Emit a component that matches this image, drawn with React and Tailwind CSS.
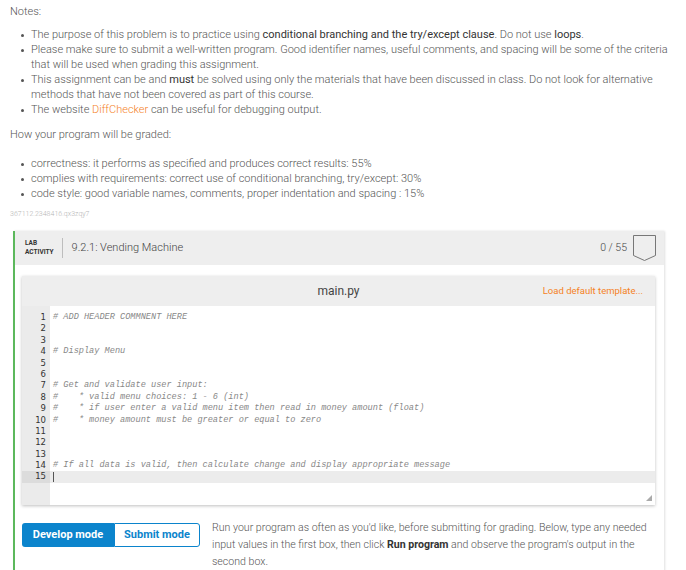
import React from "react";

const notes = [
    <>The purpose of this problem is to practice using <span className="font-normal text-[#333]">conditional branching and the try/except clause</span>. Do not use <span className="font-normal text-[#333]">loops</span>.</>,
    <>Please make sure to submit a well-written program. Good identifier names, useful comments, and spacing will be some of the criteria that will be used when grading this assignment.</>,
    <>This assignment can be and <span className="font-normal text-[#333]">must</span> be solved using only the materials that have been discussed in class. Do not look for alternative methods that have not been covered as part of this course.</>,
    <>The website <span className="text-[#f5821f]">DiffChecker</span> can be useful for debugging output.</>,
];

const grading = [
    "correctness: it performs as specified and produces correct results: 55%",
    "complies with requirements: correct use of conditional branching, try/except: 30%",
    "code style: good variable names, comments, proper indentation and spacing : 15%",
];

// source lines shown in the editor
const code = [
    "# ADD HEADER COMMNENT HERE",
    "",
    "",
    "# Display Menu",
    "",
    "",
    "# Get and validate user input:",
    "#    * valid menu choices: 1 - 6 (int)",
    "#    * if user enter a valid menu item then read in money amount (float)",
    "#    * money amount must be greater or equal to zero",
    "",
    "",
    "",
    "# If all data is valid, then calculate change and display appropriate message",
    "",
];

const Bullet = ({ children }) => (
    <li className="flex items-start">
        <span className="mt-[6.5px] ml-[11px] mr-[7px] h-[3px] w-[3px] shrink-0 rounded-full bg-[#555]"></span>
        <span>{children}</span>
    </li>
);

const App = () => {
    return (
        <div className="h-[570px] w-[686px] overflow-hidden bg-white font-['Roboto',sans-serif] text-[#555]">
            {/* instructions */}
            <div className="pl-[10px] pr-[18px] pt-[4px] text-[11px] font-light leading-[15px]">
                <p>Notes:</p>
                <ul className="mt-[8px]">
                    {notes.map((n, i) => <Bullet key={i}>{n}</Bullet>)}
                </ul>
                <p className="mt-[10px]">How your program will be graded:</p>
                <ul className="mt-[14px]">
                    {grading.map((g, i) => <Bullet key={i}>{g}</Bullet>)}
                </ul>
                <p className="mt-[9px] text-[7px] leading-[8px] text-[#b5b5b5]">367112.2348416.qx3zqy7</p>
            </div>

            {/* lab activity box */}
            <div className="mt-[13px] ml-[13px] w-[651px] border-l-2 border-[#5cb85c] shadow-[1px_0_2px_rgba(0,0,0,0.12)]">
                <div className="flex h-[34px] items-center bg-[#eeeeee] pl-[10px] pr-[7px]">
                    <div className="text-[6.5px] font-bold uppercase leading-[9px] text-[#333]">
                        Lab<br />Activity
                    </div>
                    <div className="ml-[8px] mr-[9px] h-[20px] w-px bg-[#bdbdbd]"></div>
                    <span className="text-[11px] font-light text-[#444]">9.2.1: Vending Machine</span>
                    <span className="ml-auto mr-[6px] text-[10.5px] font-light text-[#444]">0 / 55</span>
                    <svg width="24" height="27" viewBox="0 0 24 27">
                        <path d="M0.5 0.5 H22.5 V20.5 L11.5 25.5 L0.5 20.5 Z" fill="none" stroke="#777" strokeWidth="1" />
                    </svg>
                </div>

                <div className="bg-white pl-[7px] pr-[9px] pt-[11px] pb-[20px]">
                    {/* editor */}
                    <div className="shadow-[0_1px_3px_rgba(0,0,0,0.25)]">
                        <div className="grid h-[30px] grid-cols-[1fr_auto_1fr] items-center bg-[#eeeeee]">
                            <span></span>
                            <span className="text-[12px] text-[#444]">main.py</span>
                            <span className="pr-[12px] text-right text-[9.5px] text-[#f5821f]">Load default template...</span>
                        </div>
                        <div className="relative flex h-[199px] bg-white">
                            <div className="w-[28px] bg-[#ebebeb] pt-[6px]">
                                {code.map((_, i) => (
                                    <div
                                        key={i}
                                        className={i === 14
                                            ? "h-[11.4px] bg-[#dcdcdc] pr-[4px] text-right font-['DejaVu_Sans',sans-serif] text-[8.5px] leading-[11.4px] text-[#333]"
                                            : "h-[11.4px] pr-[4px] text-right font-['DejaVu_Sans',sans-serif] text-[8.5px] leading-[11.4px] text-[#333]"}
                                    >
                                        {i + 1}
                                    </div>
                                ))}
                            </div>
                            <div className="flex-1 pt-[6px]">
                                {code.map((line, i) => (
                                    <div
                                        key={i}
                                        className={i === 14
                                            ? "flex h-[11.4px] items-center bg-[#ececec] pl-[3px]"
                                            : "h-[11.4px] whitespace-pre pl-[3px] font-['Liberation_Mono',monospace] text-[8.6px] italic leading-[11.4px] text-[#888]"}
                                    >
                                        {i === 14 ? <span className="h-[10px] w-px bg-[#555]"></span> : line}
                                    </div>
                                ))}
                            </div>
                            <svg className="absolute bottom-[4px] right-[3px]" width="6" height="6" viewBox="0 0 6 6">
                                <path d="M6 0 L6 6 L0 6 Z" fill="#aaa" />
                            </svg>
                        </div>
                    </div>

                    {/* mode buttons and help text */}
                    <div className="mt-[14px] flex items-start">
                        <div className="mt-[4px] flex h-[24px] shrink-0 text-[11px] font-bold">
                            <button className="w-[92px] rounded-l-[3px] bg-[#0b84cc] text-white">Develop mode</button>
                            <button className="w-[86px] rounded-r-[3px] border border-[#0b84cc] bg-white text-[#0b84cc]">Submit mode</button>
                        </div>
                        <p className="ml-[12px] pr-[4px] text-[10.6px] font-light leading-[17px] text-[#555]">
                            Run your program as often as you'd like, before submitting for grading. Below, type any needed input values in the first box, then click <span className="font-bold text-[#333]">Run program</span> and observe the program's output in the second box.
                        </p>
                    </div>
                </div>
            </div>
        </div>
    );
};

export default App;
